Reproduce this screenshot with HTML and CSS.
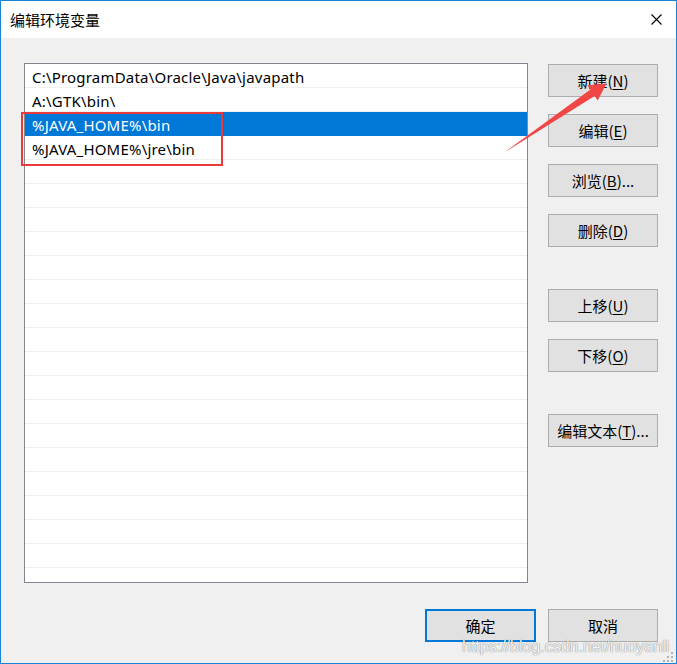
FILE: index.html
```html
<!DOCTYPE html>
<html lang="zh-CN">
<head>
<meta charset="utf-8">
<title>编辑环境变量</title>
<link rel="stylesheet" href="styles.css">
</head>
<body>
<div class="window">
  <div class="titlebar">
    <span class="title">编辑环境变量</span>
    <svg class="close" width="11" height="11" viewBox="0 0 11 11"><path d="M0.5 0.5L10.5 10.5M10.5 0.5L0.5 10.5" stroke="#000" stroke-width="1.1" fill="none"/></svg>
  </div>
  <div class="client">
    <div class="main">
      <div class="list">
        <div class="row">C:\ProgramData\Oracle\Java\javapath</div>
        <div class="row">A:\GTK\bin\</div>
        <div class="row selected">%JAVA_HOME%\bin</div>
        <div class="row">%JAVA_HOME%\jre\bin</div>
        <div class="row"></div><div class="row"></div><div class="row"></div><div class="row"></div>
        <div class="row"></div><div class="row"></div><div class="row"></div><div class="row"></div>
        <div class="row"></div><div class="row"></div><div class="row"></div><div class="row"></div>
        <div class="row"></div><div class="row"></div><div class="row"></div><div class="row"></div>
        <div class="row"></div><div class="row"></div>
      </div>
      <div class="side">
        <div class="btn">新建(<u>N</u>)</div>
        <div class="btn">编辑(<u>E</u>)</div>
        <div class="btn">浏览(<u>B</u>)...</div>
        <div class="btn group-end">删除(<u>D</u>)</div>
        <div class="btn">上移(<u>U</u>)</div>
        <div class="btn group-end">下移(<u>O</u>)</div>
        <div class="btn">编辑文本(<u>T</u>)...</div>
      </div>
    </div>
    <div class="footer">
      <div class="btn default">确定</div>
      <div class="btn">取消</div>
    </div>
  </div>

  <div class="redbox"></div>
  <svg class="arrow" width="677" height="664" viewBox="0 0 677 664">
    <polygon points="505,152 590.5,89.5 587.5,85.3 606.5,83.5 597.7,100.5 594.6,96.0" fill="#f24545"/>
  </svg>
  <div class="watermark">https://blog.csdn.net/nuoyanli</div>
  <svg class="grip" width="12" height="12" viewBox="0 0 12 12">
    <rect x="9" y="1" width="2" height="2" fill="#b4b4b4"/>
    <rect x="5" y="5" width="2" height="2" fill="#b4b4b4"/>
    <rect x="9" y="5" width="2" height="2" fill="#b4b4b4"/>
    <rect x="1" y="9" width="2" height="2" fill="#b4b4b4"/>
    <rect x="5" y="9" width="2" height="2" fill="#b4b4b4"/>
    <rect x="9" y="9" width="2" height="2" fill="#b4b4b4"/>
  </svg>
</div>
</body>
</html>
```
FILE: styles.css
```css
* { box-sizing: border-box; }
html, body { margin: 0; padding: 0; }
body {
  font-family: "Noto Sans", "Noto Sans CJK SC", sans-serif;
  font-size: 15px;
  color: #000;
  background: #f0f0f0;
}
.window {
  position: relative;
  width: 677px;
  height: 664px;
  border: 1px solid #1883d7;
  background: #f0f0f0;
  overflow: hidden;
}
.titlebar {
  height: 37px;
  background: #fff;
  display: flex;
  align-items: center;
  justify-content: space-between;
  padding: 0 14px 0 9px;
}
.title {
  font-family: "Noto Sans CJK SC", sans-serif;
  font-size: 15px;
  line-height: 1;
}
.close { display: block; }
.client {
  padding: 25px 18px 0 23px;
}
.main {
  display: flex;
}
.list {
  width: 504px;
  height: 520px;
  border: 1px solid #828790;
  background: #fff;
  overflow: hidden;
}
.row {
  height: 24px;
  line-height: 22px;
  padding: 2px 0 0 7px;
  border-bottom: 1px solid #f0f0f0;
  white-space: nowrap;
  letter-spacing: 0.2px;
  font-family: "Noto Sans", "Noto Sans CJK SC", sans-serif;
  font-size: 15px;
}
.row.selected {
  background: #0078d7;
  color: #fff;
  border-bottom-color: #0078d7;
}
.side {
  margin-left: 20px;
  width: 110px;
  display: flex;
  flex-direction: column;
  padding-top: 1px;
}
.btn {
  width: 110px;
  height: 33px;
  border: 1px solid #adadad;
  background: #e1e1e1;
  display: flex;
  align-items: center;
  justify-content: center;
  font-family: "Noto Sans CJK SC", sans-serif;
  font-size: 15px;
  margin-bottom: 17px;
  white-space: nowrap;
}
.btn u { text-underline-offset: 2px; }
.btn.group-end { margin-bottom: 42px; }
.footer {
  display: flex;
  justify-content: flex-end;
  gap: 12px;
  margin-top: 26px;
}
.footer .btn { margin-bottom: 0; }
.btn.default {
  width: 111px;
  border: 2px solid #0078d7;
}
.redbox {
  position: absolute;
  left: 20px;
  top: 111px;
  width: 202px;
  height: 54px;
  border: 2px solid #e83a3a;
}
.arrow {
  position: absolute;
  left: -1px;
  top: -1px;
  pointer-events: none;
}
.watermark {
  position: absolute;
  left: 461px;
  top: 637px;
  font-family: "Liberation Sans", Arial, sans-serif;
  font-size: 16px;
  color: rgba(255, 255, 255, 0.92);
  text-shadow: 0 0 1px rgba(80, 80, 80, 0.6), 0 0 1px rgba(80, 80, 80, 0.5);
  white-space: nowrap;
}
.grip {
  position: absolute;
  right: 2px;
  bottom: 0px;
}
```
